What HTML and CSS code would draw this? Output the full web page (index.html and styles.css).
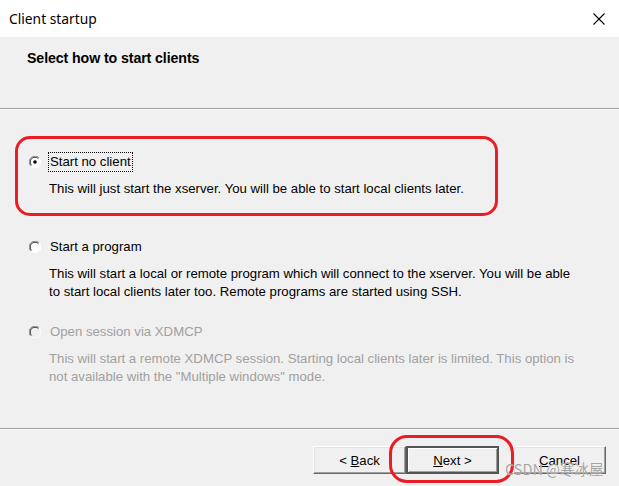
FILE: index.html
```html
<!DOCTYPE html>
<html>
<head>
<meta charset="utf-8">
<link rel="stylesheet" href="styles.css">
</head>
<body>
<div class="window">
  <div class="titlebar">
    <span class="title">Client startup</span>
    <svg class="close" width="12" height="12" viewBox="0 0 12 12"><path d="M0.5 0.5 L11.5 11.5 M11.5 0.5 L0.5 11.5" stroke="#000" stroke-width="1.1" fill="none"/></svg>
  </div>
  <div class="header">
    <div class="heading">Select how to start clients</div>
  </div>
  <div class="sep"></div>
  <div class="content">
    <div class="option">
      <div class="opt-row">
        <svg class="radio" width="12" height="12" viewBox="0 0 12 12">
          <circle cx="6" cy="6" r="5.5" fill="#fff"/>
          <path d="M1.8 10.2 A5.5 5.5 0 0 1 10.2 1.8" stroke="#8a8a8a" stroke-width="1" fill="none"/>
          <path d="M2.6 9.4 A4.5 4.5 0 0 1 9.4 2.6" stroke="#333" stroke-width="1" fill="none"/>
          <path d="M10.2 1.8 A5.5 5.5 0 0 1 1.8 10.2" stroke="#fff" stroke-width="1" fill="none"/>
          <circle cx="6" cy="6" r="1.8" fill="#000"/>
        </svg>
        <span class="label focused">Start no client</span>
      </div>
      <p class="desc">This will just start the xserver. You will be able to start local clients later.</p>
    </div>
    <div class="option">
      <div class="opt-row">
        <svg class="radio" width="12" height="12" viewBox="0 0 12 12">
          <circle cx="6" cy="6" r="5.5" fill="#fff"/>
          <path d="M1.8 10.2 A5.5 5.5 0 0 1 10.2 1.8" stroke="#8a8a8a" stroke-width="1" fill="none"/>
          <path d="M2.6 9.4 A4.5 4.5 0 0 1 9.4 2.6" stroke="#333" stroke-width="1" fill="none"/>
          <path d="M10.2 1.8 A5.5 5.5 0 0 1 1.8 10.2" stroke="#fff" stroke-width="1" fill="none"/>
        </svg>
        <span class="label">Start a program</span>
      </div>
      <p class="desc">This will start a local or remote program which will connect to the xserver. You will be able<br>to start local clients later too. Remote programs are started using SSH.</p>
    </div>
    <div class="option disabled">
      <div class="opt-row">
        <svg class="radio" width="12" height="12" viewBox="0 0 12 12">
          <circle cx="6" cy="6" r="5.5" fill="#f0f0f0"/>
          <path d="M1.8 10.2 A5.5 5.5 0 0 1 10.2 1.8" stroke="#8a8a8a" stroke-width="1" fill="none"/>
          <path d="M2.6 9.4 A4.5 4.5 0 0 1 9.4 2.6" stroke="#333" stroke-width="1" fill="none"/>
          <path d="M10.2 1.8 A5.5 5.5 0 0 1 1.8 10.2" stroke="#fff" stroke-width="1" fill="none"/>
        </svg>
        <span class="label">Open session via XDMCP</span>
      </div>
      <p class="desc">This will start a remote XDMCP session. Starting local clients later is limited. This option is<br>not available with the "Multiple windows" mode.</p>
    </div>
  </div>
  <div class="sep"></div>
  <div class="footer">
    <button class="btn">&lt; <u>B</u>ack</button>
    <button class="btn default"><u>N</u>ext &gt;</button>
    <button class="btn cancel"><u>C</u>ancel</button>
  </div>
  <div class="mark mark-option"></div>
  <div class="mark mark-next"></div>
  <div class="watermark">CSDN @寒冰屋</div>
</div>
</body>
</html>
```
FILE: styles.css
```css
html, body {
  margin: 0;
  padding: 0;
  background: #f0f0f0;
}
.window {
  position: relative;
  width: 619px;
  height: 486px;
  overflow: hidden;
  background: #f0f0f0;
  font-family: "Liberation Sans", Arial, sans-serif;
  font-size: 13.2px;
  color: #000;
}
.titlebar {
  height: 37px;
  background: #fff;
  display: flex;
  align-items: center;
  justify-content: space-between;
  padding: 0 14px 0 9px;
}
.title {
  font-family: "Noto Sans", "Liberation Sans", sans-serif;
  font-size: 13.8px;
  color: #000;
}
.close {
  display: block;
  margin-top: 1px;
}
.header {
  height: 71px;
  box-sizing: border-box;
  padding: 13px 0 0 27px;
}
.heading {
  font-weight: bold;
  font-size: 14.2px;
  line-height: 16px;
  letter-spacing: -0.1px;
}
.sep {
  height: 1px;
  background: #a0a0a0;
  border-bottom: 1px solid #fff;
}
.content {
  height: 318px;
  box-sizing: border-box;
  padding: 43px 0 0 29px;
}
.option {
  height: 85px;
}
.opt-row {
  display: flex;
  align-items: center;
  height: 18px;
}
.radio {
  display: block;
  flex: none;
}
.label {
  margin-left: 7px;
  padding: 1px 1px;
  line-height: 16px;
  border: 1px dotted transparent;
}
.label.focused {
  border-color: #000;
}
.desc {
  margin: 9px 0 0 20px;
  line-height: 18px;
}
.disabled .label,
.disabled .desc {
  color: #a0a0a0;
}
.footer {
  display: flex;
  justify-content: flex-end;
  padding: 16px 13px 0 0;
}
.btn {
  width: 93px;
  height: 28px;
  box-sizing: border-box;
  font-family: "Liberation Sans", Arial, sans-serif;
  font-size: 13.2px;
  color: #000;
  background: #f0f0f0;
  border: 1px solid;
  border-color: #fff #696969 #696969 #fff;
  box-shadow: inset -1px -1px #a0a0a0, inset 1px 1px #e3e3e3;
  padding: 0;
}
.btn.default {
  border: 2px solid #555;
  box-shadow: inset 1px 1px #fff, inset -1px -1px #a0a0a0;
}
.btn.cancel {
  margin-left: 14px;
}
.mark {
  position: absolute;
  border: 3px solid #ec1c24;
  border-radius: 15px;
  box-sizing: border-box;
}
.mark-option {
  left: 15px;
  top: 136px;
  width: 483px;
  height: 80px;
}
.mark-next {
  left: 389px;
  top: 435px;
  width: 125px;
  height: 48px;
  border-radius: 18px;
}
.watermark {
  position: absolute;
  left: 505px;
  top: 460px;
  font-family: "Noto Sans CJK SC", "Liberation Sans", sans-serif;
  font-size: 14.5px;
  line-height: 17px;
  color: rgba(140, 140, 140, 0.8);
  text-shadow: 0 0 1px #fff;
}
```
